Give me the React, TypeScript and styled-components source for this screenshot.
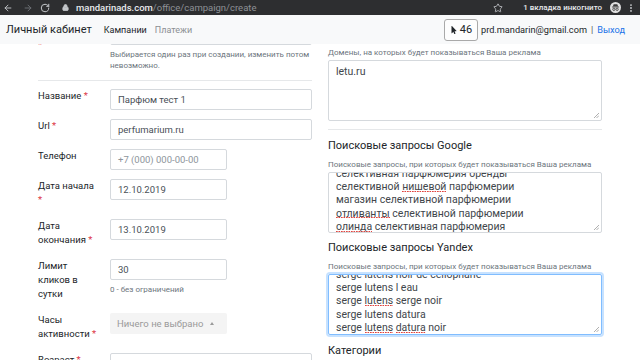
import { useLayoutEffect, useRef } from "react";
import styled, { createGlobalStyle } from "styled-components";
import { ArrowLeft, ArrowRight, RotateCw, Lock, Star, MoreVertical } from "lucide-react";
import { FaMousePointer } from "react-icons/fa";

const GlobalStyle = createGlobalStyle`
  html, body {
    margin: 0;
    padding: 0;
  }
  body {
    font-family: Roboto, "Liberation Sans", Arial, sans-serif;
    background: #fff;
    color: #212529;
  }
  #root {
    width: 640px;
    height: 360px;
    overflow: hidden;
  }
`;

const Page = styled.div`
  display: flex;
  flex-direction: column;
  height: 360px;
`;

/* browser chrome */
const Chrome = styled.div`
  height: 15px;
  flex: none;
  background: #2d2e30;
  display: flex;
  align-items: center;
  padding: 0 4px 0 3px;
  color: #e8eaed;
`;

const ChromeSlot = styled.span<{ $ml?: number; $dim?: boolean }>`
  display: flex;
  align-items: center;
  margin-left: ${(p) => p.$ml ?? 0}px;
  color: ${(p) => (p.$dim ? "#6f7276" : "#c4c7ca")};
`;

const Url = styled.div`
  margin-left: 7px;
  font-size: 9.5px;
  font-weight: 500;
  color: #e8eaed;
  white-space: nowrap;
`;

const UrlPath = styled.span`
  color: #8d9196;
  font-weight: 400;
`;

const Spacer = styled.div`
  flex: 1;
`;

const IncognitoText = styled.span`
  margin-left: 20px;
  font-size: 8px;
  font-weight: 500;
  color: #e8eaed;
  white-space: nowrap;
`;

const IncognitoBadge = styled.span`
  margin-left: 8px;
  width: 11px;
  height: 11px;
  border-radius: 50%;
  background: #e0e0e0;
  display: flex;
  align-items: center;
  justify-content: center;
`;

/* site header */
const Header = styled.header`
  height: 29px;
  flex: none;
  background: #f8f9fa;
  display: flex;
  align-items: center;
  padding: 0 15px 0 6px;
`;

const Brand = styled.div`
  font-size: 11px;
  color: #212529;
  margin-right: 12px;
`;

const NavLink = styled.span<{ $active?: boolean }>`
  font-size: 9px;
  margin-right: 8px;
  color: ${(p) => (p.$active ? "#212529" : "#8c8f93")};
`;

const CounterButton = styled.div`
  height: 22px;
  width: 34px;
  box-sizing: border-box;
  border: 1px solid #a9a9a9;
  border-radius: 3px;
  background: #fdfdfd;
  display: flex;
  align-items: center;
  justify-content: center;
  gap: 2px;
  font-size: 11px;
  color: #212529;
`;

const UserLine = styled.div`
  margin-left: 3px;
  font-size: 9.2px;
  color: #212529;
  white-space: nowrap;
`;

const Sep = styled.span`
  margin: 0 4px;
  color: #555;
`;

const Logout = styled.span`
  color: #1a73e8;
`;

/* content */
const Main = styled.main`
  flex: 1;
  overflow: hidden;
`;

const Columns = styled.div`
  display: grid;
  grid-template-columns: 290px 290px;
  padding-left: 30px;
  padding-bottom: 80px;
`;

const Column = styled.div<{ $top?: number }>`
  padding: ${(p) => p.$top ?? 0}px 8px 0;
`;

const FormRow = styled.div`
  display: grid;
  grid-template-columns: 72px 1fr;
  margin-bottom: 9px;
`;

const Label = styled.div`
  font-size: 9.5px;
  line-height: 14px;
  padding: 0 12px 3px 0;
  color: #212529;
`;

const Req = styled.span`
  color: #dc3545;
`;

const Field = styled.div`
  display: flex;
  flex-direction: column;
`;

const Input = styled.div<{ $short?: boolean; $placeholder?: boolean }>`
  height: 21px;
  width: ${(p) => (p.$short ? "117px" : "100%")};
  box-sizing: border-box;
  border: 1px solid #d5d9dd;
  border-radius: 2px;
  padding: 0 7px;
  display: flex;
  align-items: center;
  font-size: 9.5px;
  color: ${(p) => (p.$placeholder ? "#8e959b" : "#495057")};
  background: #fff;
`;

const Select = styled.div`
  height: 21px;
  width: 117px;
  box-sizing: border-box;
  border-radius: 2px;
  padding: 0 7px;
  background: #f4f4f4;
  display: flex;
  align-items: center;
  justify-content: space-between;
  font-size: 9.5px;
  color: #9a9a9a;
`;

const CaretUp = styled.span`
  width: 0;
  height: 0;
  margin-right: 6px;
  border-left: 2.5px solid transparent;
  border-right: 2.5px solid transparent;
  border-bottom: 3px solid #9a9a9a;
`;

const Help = styled.div`
  margin-top: 4px;
  font-size: 8px;
  line-height: 11px;
  color: #6c757d;
`;

const Divider = styled.div`
  height: 1px;
  background: #e6e8ea;
  margin: 0 0 8px;
`;

const SectionTitle = styled.div`
  font-size: 11px;
  line-height: 16px;
  margin-bottom: 5px;
  color: #212529;
`;

const Hint = styled.div`
  font-size: 8px;
  line-height: 11px;
  margin-bottom: 2px;
  color: #6c757d;
`;

const Group = styled.div<{ $mb?: number }>`
  margin-bottom: ${(p) => p.$mb ?? 8}px;
`;

const AreaWrap = styled.div`
  position: relative;
`;

const Area = styled.div<{ $focused?: boolean }>`
  height: 61px;
  box-sizing: border-box;
  border: 1px solid ${(p) => (p.$focused ? "#80bdff" : "#d5d9dd")};
  box-shadow: ${(p) => (p.$focused ? "0 0 0 2px rgba(0, 123, 255, 0.22)" : "none")};
  border-radius: 2px;
  padding: 4px 7px;
  overflow: hidden;
  font-size: 10.5px;
  line-height: 13.3px;
  color: #41464b;
`;

const Line = styled.div`
  white-space: nowrap;
`;

/* spell-check mark under a word */
const Typo = styled.span`
  background-image: linear-gradient(to right, #e0443e 55%, transparent 0);
  background-size: 2.5px 1px;
  background-repeat: repeat-x;
  background-position: 0 88%;
`;

const Grip = styled.svg`
  position: absolute;
  right: 3px;
  bottom: 3px;
`;

function ResizeGrip() {
  return (
    <Grip width="6" height="6" viewBox="0 0 6 6">
      <path d="M1 6 L6 1 M3.5 6 L6 3.5" stroke="#9a9a9a" strokeWidth="0.8" />
    </Grip>
  );
}

function TextArea({
  lines,
  scroll,
  focused,
}: {
  lines: React.ReactNode[];
  scroll: number;
  focused?: boolean;
}) {
  const ref = useRef<HTMLDivElement>(null);
  useLayoutEffect(() => {
    if (ref.current) ref.current.scrollTop = scroll;
  }, [scroll]);
  return (
    <AreaWrap>
      <Area ref={ref} $focused={focused}>
        {lines.map((l, i) => (
          <Line key={i}>{l}</Line>
        ))}
      </Area>
      <ResizeGrip />
    </AreaWrap>
  );
}

function IncognitoIcon() {
  return (
    <svg width="9" height="9" viewBox="0 0 10 10">
      <path d="M2 4 L3 1.5 L7 1.5 L8 4 Z" fill="#3a3a3a" />
      <rect x="1" y="4" width="8" height="0.9" fill="#3a3a3a" />
      <circle cx="3.2" cy="7" r="1.3" fill="none" stroke="#3a3a3a" strokeWidth="0.9" />
      <circle cx="6.8" cy="7" r="1.3" fill="none" stroke="#3a3a3a" strokeWidth="0.9" />
    </svg>
  );
}

const googleLines = [
  "селективная парфюмерия",
  "купить селективную парфюмерию",
  "селективная парфюмерия москва",
  "селективная парфюмерия оренды",
  <>
    селективной <Typo>нишевой</Typo> парфюмерии
  </>,
  "магазин селективной парфюмерии",
  <>
    <Typo>отливанты</Typo> селективной парфюмерии
  </>,
  <>
    <Typo>олинда</Typo> селективная парфюмерия
  </>,
  "нишевая парфюмерия",
];

const yandexLines = [
  "serge lutens",
  "serge lutens la fille de berlin",
  "serge lutens ambre sultan",
  "serge lutens noir de cellophane",
  "serge lutens l eau",
  <>
    serge <Typo>lutens</Typo> serge noir
  </>,
  "serge lutens datura",
  <>
    serge <Typo>lutens</Typo> <Typo>datura</Typo> noir
  </>,
];

export default function App() {
  const mainRef = useRef<HTMLElement>(null);
  useLayoutEffect(() => {
    if (mainRef.current) mainRef.current.scrollTop = 20;
  }, []);

  return (
    <>
      <GlobalStyle />
      <Page>
        <Chrome>
          <ChromeSlot>
            <ArrowLeft size={10} strokeWidth={2.2} />
          </ChromeSlot>
          <ChromeSlot $ml={10} $dim>
            <ArrowRight size={10} strokeWidth={2.2} />
          </ChromeSlot>
          <ChromeSlot $ml={7}>
            <RotateCw size={10} strokeWidth={2.4} />
          </ChromeSlot>
          <ChromeSlot $ml={12}>
            <Lock size={7} strokeWidth={3} fill="#c4c7ca" />
          </ChromeSlot>
          <Url>
            mandarinads.com<UrlPath>/office/campaign/create</UrlPath>
          </Url>
          <Spacer />
          <ChromeSlot>
            <Star size={10} strokeWidth={2} />
          </ChromeSlot>
          <IncognitoText>1 вкладка инкогнито</IncognitoText>
          <IncognitoBadge>
            <IncognitoIcon />
          </IncognitoBadge>
          <ChromeSlot $ml={5}>
            <MoreVertical size={10} strokeWidth={2.6} />
          </ChromeSlot>
        </Chrome>

        <Header>
          <Brand>Личный кабинет</Brand>
          <NavLink $active>Кампании</NavLink>
          <NavLink>Платежи</NavLink>
          <Spacer />
          <CounterButton>
            <FaMousePointer size={8} />
            46
          </CounterButton>
          <UserLine>
            prd.mandarin@gmail.com<Sep>|</Sep>
            <Logout>Выход</Logout>
          </UserLine>
        </Header>

        <Main ref={mainRef}>
          <Columns>
            <Column>
              <FormRow>
                <Label>
                  Площадка
                  <br />
                  <Req>*</Req>
                </Label>
                <Field>
                  <Input>Яндекс.Директ</Input>
                  <Help>Выбирается один раз при создании, изменить потом невозможно.</Help>
                </Field>
              </FormRow>
              <Divider />
              <FormRow>
                <Label>
                  Название <Req>*</Req>
                </Label>
                <Input>Парфюм тест 1</Input>
              </FormRow>
              <FormRow>
                <Label>
                  Url <Req>*</Req>
                </Label>
                <Input>perfumarium.ru</Input>
              </FormRow>
              <FormRow>
                <Label>Телефон</Label>
                <Input $short $placeholder>
                  +7 (000) 000-00-00
                </Input>
              </FormRow>
              <FormRow>
                <Label>
                  Дата начала <Req>*</Req>
                </Label>
                <Input $short>12.10.2019</Input>
              </FormRow>
              <FormRow>
                <Label>
                  Дата окончания <Req>*</Req>
                </Label>
                <Input $short>13.10.2019</Input>
              </FormRow>
              <FormRow>
                <Label>Лимит кликов в сутки</Label>
                <Field>
                  <Input $short>30</Input>
                  <Help>0 - без ограничений</Help>
                </Field>
              </FormRow>
              <FormRow>
                <Label>
                  Часы активности <Req>*</Req>
                </Label>
                <Field>
                  <Select>
                    Ничего не выбрано
                    <CaretUp />
                  </Select>
                </Field>
              </FormRow>
              <FormRow>
                <Label>
                  Возраст <Req>*</Req>
                </Label>
                <Input $placeholder>+ Полный</Input>
              </FormRow>
            </Column>

            <Column $top={2}>
              <Group>
                <SectionTitle>Домены</SectionTitle>
                <Hint>Домены, на которых будет показываться Ваша реклама</Hint>
                <TextArea lines={["letu.ru"]} scroll={0} />
              </Group>
              <Divider />
              <Group $mb={7}>
                <SectionTitle>Поисковые запросы Google</SectionTitle>
                <Hint>Поисковые запросы, при которых будет показываться Ваша реклама</Hint>
                <TextArea lines={googleLines} scroll={50} />
              </Group>
              <Group>
                <SectionTitle>Поисковые запросы Yandex</SectionTitle>
                <Hint>Поисковые запросы, при которых будет показываться Ваша реклама</Hint>
                <TextArea lines={yandexLines} scroll={51} focused />
              </Group>
              <Group>
                <SectionTitle>Категории</SectionTitle>
              </Group>
            </Column>
          </Columns>
        </Main>
      </Page>
    </>
  );
}
